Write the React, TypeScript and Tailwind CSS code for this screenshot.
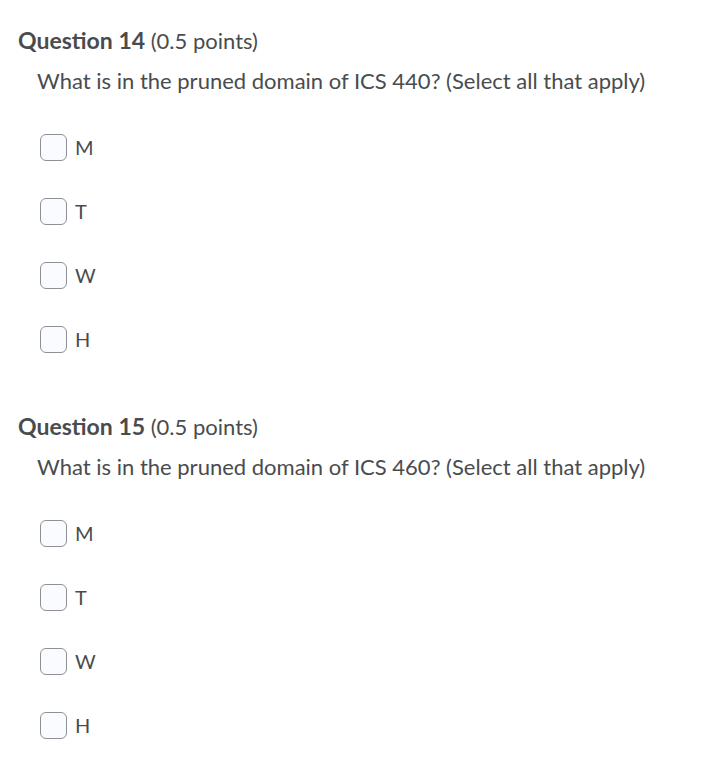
const questions = [
  { num: 14, course: "ICS 440" },
  { num: 15, course: "ICS 460" },
];

const options = ["M", "T", "W", "H"];

function Option({ label }: { label: string }) {
  return (
    <label className="flex items-center h-[26px] gap-[8px]">
      <span className="w-[27px] h-[27px] rounded-[6px] border border-[#8d9195] bg-[#f9fbff] shrink-0" />
      <span className="text-[20px] text-[#494c4e]">{label}</span>
    </label>
  );
}

function Question({ num, course }: { num: number; course: string }) {
  return (
    <div className="flex flex-col">
      <h2 className="text-[22px] leading-[30px] text-[#494c4e]">
        <span className="font-bold text-[23px]">Question {num}</span>{" "}
        <span>(0.5 points)</span>
      </h2>
      <p className="mt-[11px] pl-[19px] text-[22px] leading-[28px] text-[#494c4e]">
        What is in the pruned domain of {course}? (Select all that apply)
      </p>
      <div className="mt-[39px] pl-[22px] flex flex-col gap-[38px]">
        {options.map((o) => (
          <Option key={o} label={o} />
        ))}
      </div>
    </div>
  );
}

export default function App() {
  return (
    <div
      className="w-[717px] h-[765px] bg-white pl-[18px] pt-[25px] flex flex-col gap-[59px]"
      style={{ fontFamily: "Lato, 'Liberation Sans', sans-serif" }}
    >
      {questions.map((q) => (
        <Question key={q.num} num={q.num} course={q.course} />
      ))}
    </div>
  );
}
